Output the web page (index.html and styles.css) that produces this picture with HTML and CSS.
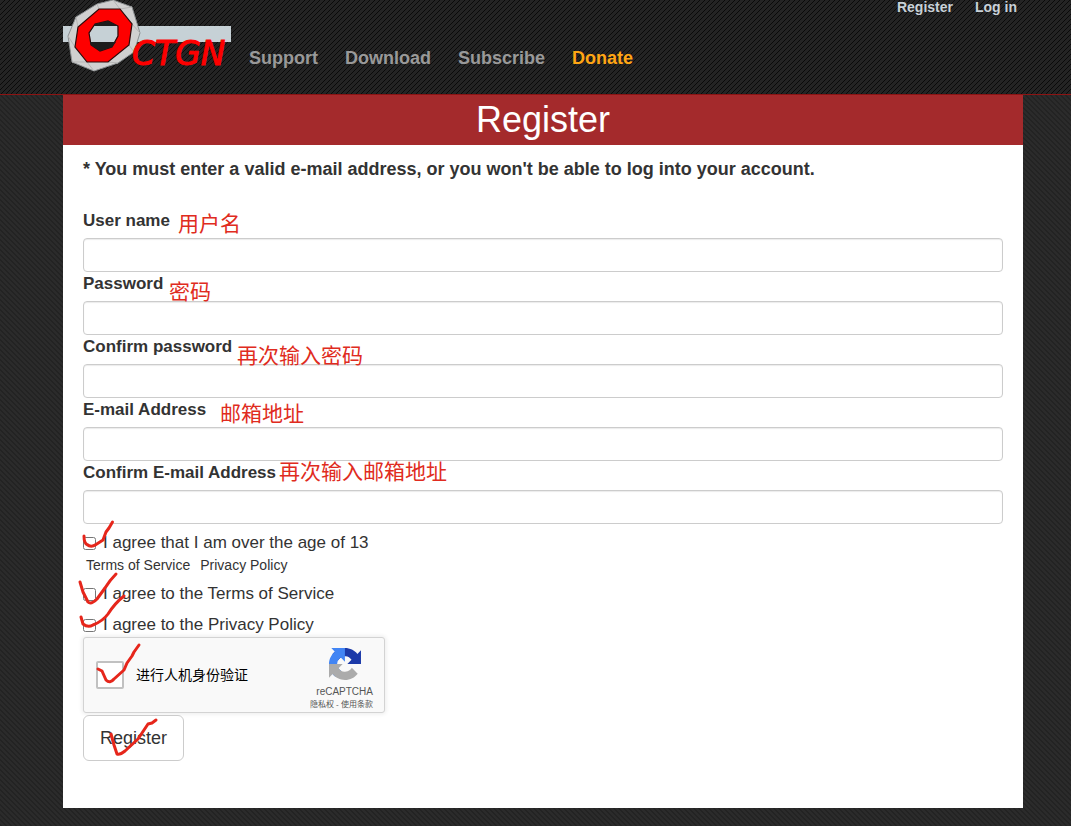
FILE: index.html
```html
<!DOCTYPE html>
<html lang="en">
<head>
<meta charset="utf-8">
<title>Register - OCTGN</title>
<link rel="stylesheet" href="styles.css">
</head>
<body>
<header class="site-header">
  <div class="container header-row">
    <a class="logo" href="#" aria-label="OCTGN home">
      <svg width="168" height="72" viewBox="0 0 168 72">
        <rect y="26" width="168" height="16" fill="#c6d1d6"/>
        <path d="M34 4 50 0 69 7 77 33 71 52 55 63 31 71 9 62 5 36 13 17ZM32 24 26 33 28 45 37 51 49 47 55 36 55 26 45 21Z" fill="#d0d0d0" fill-rule="evenodd" stroke="#8b8f91" stroke-width="1"/>
        <path d="M34 4 36 9M50 0 57 9M69 7 57 9M77 33 69 24M71 52 66 45M55 63 45 62M31 71 24 62M9 62 24 62M5 36 12 47M13 17 15 27" stroke="#b5b5b5" fill="none"/>
        <path d="M36 9H57L69 24 66 45 45 62H24L12 47 15 27ZM32 24 26 33 28 45 37 51 49 47 55 36 55 26 45 21Z" fill="#fe0000" fill-rule="evenodd" stroke="#2b0a0a" stroke-width="1.2"/>
        <path d="M27 42 28 45 37 51 49 47 53 42ZM32 24 45 21 55 26H31Z" fill="#1c1c1c"/>
        <text class="logo-text" x="69" y="65">CTGN</text>
      </svg>
    </a>
    <nav class="main-nav">
      <a href="#">Support</a>
      <a href="#">Download</a>
      <a href="#">Subscribe</a>
      <a class="donate" href="#">Donate</a>
    </nav>
    <nav class="account-nav">
      <a href="#">Register</a>
      <a href="#">Log in</a>
    </nav>
  </div>
</header>
<div class="page">
<main class="container panel">
  <h1 class="title">Register</h1>
  <form class="form">
    <p class="notice">* You must enter a valid e-mail address, or you won't be able to log into your account.</p>
    <div class="field">
      <label for="user">User name</label><span class="note note-user" lang="zh">用户名</span>
      <input id="user" type="text">
    </div>
    <div class="field">
      <label for="pass">Password</label><span class="note note-pass" lang="zh">密码</span>
      <input id="pass" type="password">
    </div>
    <div class="field">
      <label for="pass2">Confirm password</label><span class="note note-pass2" lang="zh">再次输入密码</span>
      <input id="pass2" type="password">
    </div>
    <div class="field">
      <label for="mail">E-mail Address</label><span class="note note-mail" lang="zh">邮箱地址</span>
      <input id="mail" type="email">
    </div>
    <div class="field">
      <label for="mail2">Confirm E-mail Address</label><span class="note note-mail2" lang="zh">再次输入邮箱地址</span>
      <input id="mail2" type="email">
    </div>
    <div class="agree-list">
      <div class="agree">
        <input id="age" type="checkbox"><label for="age">I agree that I am over the age of 13</label>
        <svg class="mark" viewBox="0 0 10 10"><path d="M1 5Q1 12 4 13.500Q8 17 13 13.500L20 9 23 1 26 -3 29.500 -9"/></svg>
      </div>
      <div class="legal"><a href="#">Terms of Service</a><a href="#">Privacy Policy</a></div>
      <div class="agree">
        <input id="tos" type="checkbox"><label for="tos">I agree to the Terms of Service</label>
        <svg class="mark" viewBox="0 0 10 10"><path d="M-3 0 0 10 5 20Q8 23 14 17L22 6Q27 -2 33 -8"/></svg>
      </div>
      <div class="agree">
        <input id="privacy" type="checkbox"><label for="privacy">I agree to the Privacy Policy</label>
        <svg class="mark" viewBox="0 0 10 10"><path d="M-2 4 0 11Q5 15 10 12 20 8 25 1 32 -10 41 -17"/></svg>
      </div>
    </div>
    <div class="captcha" lang="zh">
      <input id="human" type="checkbox"><label for="human">进行人机身份验证</label>
      <div class="captcha-brand">
        <svg class="brand-logo" width="32" height="32" viewBox="0 0 64 64">
          <path fill="#1c3aa9" d="M64 31.955l-.033-1.37V4.687l-7.160 7.160C50.948 4.674 42.033.093 32.050.093c-10.400 0-19.622 4.960-25.458 12.640l11.736 11.860a15.550 15.550 0 0 1 4.754-5.334c2.050-1.600 4.952-2.906 8.968-2.906.485 0 .860.057 1.135.163 4.976.393 9.288 3.140 11.828 7.124l-8.307 8.307L64 31.953"/>
          <path fill="#4285f4" d="M31.862.094l-1.370.033H4.594l7.160 7.160C4.580 13.147 0 22.060 0 32.046c0 10.400 4.960 19.622 12.640 25.458L24.500 45.768a15.550 15.550 0 0 1-5.334-4.754c-1.600-2.050-2.906-4.952-2.906-8.968 0-.485.057-.860.163-1.135.393-4.976 3.140-9.288 7.124-11.828l8.307 8.307L31.860.095"/>
          <path fill="#ababab" d="M.001 32.045l.033 1.370v25.898l7.160-7.160c5.860 7.173 14.774 11.754 24.760 11.754 10.400 0 19.622-4.960 25.458-12.640l-11.736-11.860a15.550 15.550 0 0 1-4.754 5.334c-2.050 1.600-4.952 2.906-8.968 2.906-.485 0-.860-.057-1.135-.163-4.976-.393-9.288-3.140-11.828-7.124l8.307-8.307c-10.522.040-22.400.066-27.295-.005"/>
        </svg>
        <span class="brand-name">reCAPTCHA</span>
        <span class="brand-links"><a href="#">隐私权</a> - <a href="#">使用条款</a></span>
      </div>
      <svg class="mark" viewBox="0 0 10 10"><path d="M14 31 18 33 22 42Q26 46 30 41L40 32 43 25 48 18 50 14 55 7"/></svg>
    </div>
    <div class="submit">
      <button type="submit">Register</button>
      <svg class="mark" viewBox="0 0 10 10"><path d="M28 19 31 30 34 39Q37 40 42 36L55 24 65 9 69 8 73 5"/></svg>
    </div>
  </form>
</main>
</div>
</body>
</html>
```
FILE: styles.css
```css
* { box-sizing: border-box; }

body {
  margin: 0;
  padding-bottom: 18px;
  font-family: "Liberation Sans", "Noto Sans CJK SC", sans-serif;
  font-size: 14px;
  line-height: 20px;
  color: #333;
  background: linear-gradient(45deg, #232323 0 20%, #2b2b2b 20% 50%, #232323 50% 70%, #2b2b2b 70%) 0 0 / 5px 5px;
}

a { color: inherit; text-decoration: none; }

.site-header,
.page { padding-left: 15px; }

.site-header {
  border-bottom: 1px solid #8c1414;
  background: linear-gradient(135deg, #0a0a0a 0 10%, #242424 10% 50%, #0a0a0a 50% 60%, #242424 60%) 0 0 / 5px 5px;
}

.container { max-width: 960px; margin: 0 auto; }

.header-row { display: flex; align-items: flex-start; height: 94px; }

.logo svg { display: block; overflow: visible; }
.logo-text {
  font: italic 400 33px "DejaVu Sans", sans-serif;
  fill: #fe0000;
  stroke: #fe0000;
  stroke-width: 1;
}

.main-nav {
  display: flex;
  gap: 27px;
  padding: 48px 18px 0;
  font-size: 18px;
  font-weight: bold;
  color: #999;
}
.main-nav .donate { color: #ffa614; }

.account-nav {
  display: flex;
  gap: 22px;
  margin-left: auto;
  padding-right: 6px;
  line-height: 14px;
  font-weight: bold;
  color: #c8d1d8;
}

.panel { background: #fff; }

.title {
  margin: 0;
  padding: 5px 0;
  background: #a42a2c;
  color: #fff;
  font-size: 36px;
  font-weight: normal;
  line-height: 40px;
  text-align: center;
}

.form { padding: 12px 20px 47px; }

.notice {
  margin: 0 0 28px;
  font-size: 18px;
  line-height: 24px;
  font-weight: bold;
}

.field { position: relative; }
.field label {
  display: block;
  padding-bottom: 5px;
  font-size: 17px;
  line-height: 24px;
  font-weight: bold;
}
.field input {
  display: block;
  width: 100%;
  height: 34px;
  padding: 6px 12px;
  border: 1px solid #ccc;
  border-radius: 4px;
  background: #fff;
  box-shadow: inset 0 1px 1px rgba(0, 0, 0, .08);
  font: inherit;
}

.note {
  position: absolute;
  font-family: "Noto Sans CJK SC", sans-serif;
  font-size: 21px;
  font-weight: 400;
  line-height: 24px;
  color: #e02b20;
  white-space: nowrap;
}
.note-user { left: 95px; top: 1px; }
.note-pass { left: 86px; top: 6px; }
.note-pass2 { left: 154px; top: 7px; }
.note-mail { left: 137px; top: 2px; }
.note-mail2 { left: 196px; top: -3px; }

.agree-list { padding-top: 7px; }
.agree {
  position: relative;
  display: flex;
  align-items: center;
  gap: 7px;
  margin-bottom: 7px;
  font-size: 17px;
  line-height: 24px;
}
.agree input { width: 13px; height: 13px; margin: 0; }
.agree:first-child { margin-bottom: 0; }
.agree:last-child { margin-bottom: 0; }
.legal { display: flex; gap: 10px; padding: 0 3px 7px; }

.mark {
  position: absolute;
  left: 0;
  top: 0;
  width: 10px;
  height: 10px;
  overflow: visible;
  pointer-events: none;
  fill: none;
  stroke: #e6261b;
  stroke-width: 3;
  stroke-linecap: round;
  stroke-linejoin: round;
}

.captcha {
  position: relative;
  display: flex;
  align-items: center;
  max-width: 302px;
  height: 76px;
  padding: 0 11px 0 12px;
  border: 1px solid #d3d3d3;
  border-radius: 3px;
  background: #f9f9f9;
  box-shadow: 0 0 4px 1px rgba(0, 0, 0, .08);
  color: #000;
}
.captcha input {
  appearance: none;
  width: 28px;
  height: 28px;
  margin: 0 12px 0 0;
  border: 2px solid #c1c1c1;
  border-radius: 2px;
  background: #fff;
}
.captcha-brand {
  display: flex;
  flex-direction: column;
  align-items: flex-end;
  margin-left: auto;
  padding-top: 8px;
  color: #555;
}
.brand-logo { margin-right: 12px; }
.brand-name { padding-top: 4px; font-size: 10px; line-height: 16px; }
.brand-links { font-size: 8px; line-height: 10px; }

.submit { position: relative; margin-top: 2px; }
.submit button {
  display: block;
  height: 46px;
  padding: 10px 16px;
  border: 1px solid #ccc;
  border-radius: 6px;
  background: #fff;
  color: #333;
  font: inherit;
  font-size: 18px;
  line-height: 24px;
}
```
